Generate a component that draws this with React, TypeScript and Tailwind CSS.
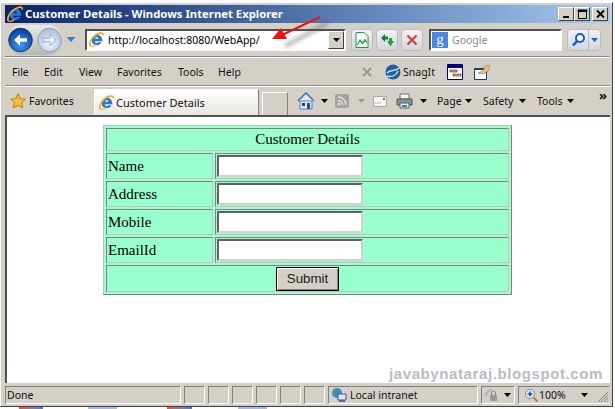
const ui = "font-['Noto_Sans','Liberation_Sans',sans-serif]";

function Caret({ className = "" }: { className?: string }) {
  return (
    <svg width="7" height="4" viewBox="0 0 7 4" className={className}>
      <path d="M0 0h7L3.5 4z" fill="currentColor" />
    </svg>
  );
}

function IeLogo({ size = 16 }: { size?: number }) {
  return (
    <svg width={size} height={size} viewBox="0 0 16 16" className="shrink-0">
      <path
        d="M8.500 2.800c-3.300 0-5.700 2.500-5.700 5.700s2.400 5.500 5.400 5.500c2.500 0 4.300-1.100 5.200-3.200H10c-.4.700-1 1-1.800 1-1 0-1.900-.8-2-2h8c.3-4-2.200-7-5.700-7zM6.300 7.300c.2-1 1-1.700 2-1.700s1.800.7 1.900 1.700z"
        fill="#2378d8"
        fillRule="evenodd"
      />
      <path d="M1.200 15C-.5 10 5 3 12 1.200c2.200-.5 3.600.3 3 2.200" fill="none" stroke="#f2a818" strokeWidth="1.700" />
      <path d="M1.200 15c2 .9 4.500-.2 6.500-1.800" fill="none" stroke="#f2a818" strokeWidth="1.200" />
    </svg>
  );
}

function NavCircle({ active }: { active: boolean }) {
  return (
    <svg width="25" height="26" viewBox="0 0 25 26">
      <defs>
        <radialGradient id="navBack" cx="50%" cy="70%" r="65%">
          <stop offset="0%" stopColor="#3f9cf0" />
          <stop offset="100%" stopColor="#0a3f9c" />
        </radialGradient>
        <radialGradient id="navFwd" cx="50%" cy="65%" r="65%">
          <stop offset="0%" stopColor="#f2f5fa" />
          <stop offset="100%" stopColor="#a9bbd6" />
        </radialGradient>
      </defs>
      <circle cx="12.500" cy="13" r="11.800" fill={active ? "url(#navBack)" : "url(#navFwd)"} stroke={active ? "#123a7c" : "#8ea2bf"} />
      {active ? (
        <path d="M19 11.200h-7V7.500L6 13l6 5.500v-3.700h7z" fill="#fff" />
      ) : (
        <path d="M6 11.200h7V7.500l6 5.500-6 5.500v-3.700H6z" fill="#eef2f8" stroke="#8b9db8" strokeWidth=".8" />
      )}
    </svg>
  );
}

function WinButton({ kind }: { kind: "min" | "max" | "close" }) {
  return (
    <div className="flex h-[14px] w-[16px] items-center justify-center border border-t-white border-l-white border-r-[#404040] border-b-[#404040] bg-[#d4d0c8]">
      <svg width="11" height="10" viewBox="0 0 11 10">
        {kind === "min" && <path d="M2 7h6v2H2z" fill="#000" />}
        {kind === "max" && <path d="M1.500 1.500h8v8h-8zM1 1h9v1.500H1z" fill="none" stroke="#000" />}
        {kind === "close" && <path d="M2 1.500l7 7M9 1.500l-7 7" stroke="#000" strokeWidth="1.800" />}
      </svg>
    </div>
  );
}

function ToolButton({ children }: { children: React.ReactNode }) {
  return (
    <div className="flex h-[22px] w-[22px] items-center justify-center rounded-[4px] border border-[#b8bcc4] bg-gradient-to-b from-[#f0f2f6] to-[#d2d6de]">
      {children}
    </div>
  );
}

function Separator() {
  return <div className="h-[2px] shrink-0 border-t border-b border-t-[#8a8a8a] border-b-white" />;
}

function Toolbar() {
  return (
    <div className="flex h-[33px] shrink-0 items-center pl-[2px]">
      <div className="flex h-[30px] items-center gap-[4px] rounded-full bg-gradient-to-b from-[#eceae6] to-[#b8b6b0] pl-[1px] pr-[1px]">
        <NavCircle active />
        <NavCircle active={false} />
      </div>
      <Caret className="ml-[3px] h-[5px] w-[10px] text-[#2f7fd0]" />
      <div className="ml-[9px] flex h-[22px] w-[261px] items-center border-2 border-t-[#505050] border-l-[#505050] border-r-white border-b-white bg-white">
        <div className="ml-[2px]">
          <IeLogo size={15} />
        </div>
        <span className="ml-[4px] pt-[2px] text-[10.500px] leading-none text-black">http://localhost:8080/WebApp/</span>
        <div className="ml-auto flex h-[18px] w-[16px] items-center justify-center border border-t-white border-l-white border-r-[#404040] border-b-[#404040] bg-[#d4d0c8]">
          <Caret className="text-black" />
        </div>
      </div>
      <div className="ml-[5px] flex items-center gap-[3px]">
        <ToolButton>
          <svg width="14" height="16" viewBox="0 0 14 16">
            <path d="M1 .5h8l4 4v11H1z" fill="#fff" stroke="#1e9a3c" />
            <path d="M2 12l3-5 2.500 3L10 6.500l2 3v2l-2-2-2.500 3L5 9.500 2 14z" fill="#2aa84a" />
          </svg>
        </ToolButton>
        <ToolButton>
          <svg width="15" height="14" viewBox="0 0 15 14">
            <path d="M1 5l4-4v2.500h3v3H5V9z" fill="#1e7a30" />
            <path d="M14 8l-3.500 5.500L7 8h2V5h3v3z" fill="#2fa040" />
          </svg>
        </ToolButton>
        <ToolButton>
          <svg width="12" height="12" viewBox="0 0 12 12">
            <path d="M1.500 1.500l9 9M10.500 1.500l-9 9" stroke="#c8484a" strokeWidth="2.400" />
          </svg>
        </ToolButton>
      </div>
      <div className="ml-[6px] flex h-[22px] w-[133px] items-center border-2 border-t-[#505050] border-l-[#505050] border-r-white border-b-white bg-white">
        <div className="ml-[1px] flex h-[16px] w-[16px] items-center justify-center bg-[#4a86e8] font-['Liberation_Serif',serif] text-[15px] leading-none text-white">
          g
        </div>
        <span className="ml-[4px] pt-[2px] text-[10.500px] leading-none text-[#8a8a8a]">Google</span>
      </div>
      <div className="ml-[5px] flex h-[22px] w-[34px] rounded-[4px] border border-[#b8bcc4] bg-gradient-to-b from-[#f0f2f6] to-[#d2d6de]">
        <div className="flex w-[21px] items-center justify-center border-r border-[#b8bcc4]">
          <svg width="15" height="15" viewBox="0 0 15 15">
            <circle cx="9" cy="6" r="4" fill="#fff" stroke="#1258d0" strokeWidth="2" />
            <path d="M6 9l-4 4.500" stroke="#1258d0" strokeWidth="2.600" />
          </svg>
        </div>
        <div className="flex flex-1 items-center justify-center">
          <Caret className="text-[#1a5fd0]" />
        </div>
      </div>
    </div>
  );
}

function MenuBar() {
  return (
    <div className="flex h-[27px] shrink-0 items-center pt-[1px] text-[10.500px] leading-none text-[#111]">
      <span className="ml-[7px] w-[16px]">File</span>
      <span className="ml-[16px] w-[18px]">Edit</span>
      <span className="ml-[17px] w-[21px]">View</span>
      <span className="ml-[17px] w-[44px]">Favorites</span>
      <span className="ml-[17px] w-[24px]">Tools</span>
      <span className="ml-[16px] w-[21px]">Help</span>
      <svg width="10" height="10" viewBox="0 0 10 10" className="ml-[123px]">
        <path d="M1 1l8 8M9 1L1 9" stroke="#9a9a9a" strokeWidth="2.200" />
      </svg>
      <svg width="16" height="16" viewBox="0 0 16 16" className="ml-[13px]">
        <circle cx="8" cy="8" r="7.500" fill="#1f5f9f" />
        <path d="M2 9c3-4 8-1 12-5M2 12c4 1 9 0 11-5" fill="none" stroke="#bfe2f5" strokeWidth="1.600" />
      </svg>
      <span className="ml-[2px] w-[32px]">SnagIt</span>
      <svg width="16" height="16" viewBox="0 0 16 16" className="ml-[12px]">
        <path d="M.5.500h15v15H.5z" fill="#fff" stroke="#000080" />
        <path d="M1 1h14v3H1z" fill="#000080" />
        <path d="M3 6h7v2H3zM6 10h8v2H6z" fill="#f0b020" stroke="#000080" strokeWidth=".5" />
      </svg>
      <svg width="16" height="16" viewBox="0 0 16 16" className="ml-[11px]">
        <path d="M.5 4.500h12v11H.5z" fill="#fff" stroke="#1a3a7a" />
        <path d="M1 4h11v2H1z" fill="#1a3a7a" />
        <path d="M4 9l5-2 2-5 5-1-2 6-5 3z" fill="#e8c078" stroke="#8a6a30" strokeWidth=".5" />
      </svg>
    </div>
  );
}

function TabBar() {
  return (
    <div className="flex h-[28px] shrink-0 items-center text-[10.500px] leading-none text-[#111]">
      <svg width="16" height="16" viewBox="0 0 16 16" className="ml-[5px]">
        <path d="M8 .8l2.200 4.800 5.200.6-3.900 3.500 1.100 5.200L8 12.300 3.400 14.900l1.100-5.200L.6 6.200l5.200-.6z" fill="#f8c030" stroke="#c07a10" />
      </svg>
      <span className="ml-[3px] w-[45px]">Favorites</span>
      <div className="ml-[20px] flex h-[26px] w-[165px] items-center self-end border-t border-l border-r border-t-white border-l-white border-r-[#808080] bg-gradient-to-b from-white to-[#e8e6e0] pl-[4px] text-[11px]">
        <IeLogo size={15} />
        <span className="ml-[2px]">Customer Details</span>
      </div>
      <div className="ml-[3px] h-[23px] w-[26px] self-end border-t border-l border-r border-t-white border-l-white border-r-[#808080]" />
      <svg width="18" height="18" viewBox="0 0 18 18" className="ml-[9px]">
        <path d="M1 9l8-8 8 8" fill="#dbe8f6" stroke="#3f6fb0" strokeWidth="1.500" />
        <path d="M3 9h12v8H3z" fill="#dce6f2" stroke="#5a7fb0" />
        <path d="M5 11h3v3H5z" fill="#1f3f80" />
        <path d="M10 11h3v6h-3z" fill="#1f4fa0" />
      </svg>
      <Caret className="ml-[6px] text-black" />
      <div className="ml-[7px] flex h-[14px] w-[14px] items-center justify-center rounded-[2px] bg-[#a4a4a0]">
        <svg width="10" height="10" viewBox="0 0 10 10">
          <circle cx="2" cy="8" r="1.300" fill="#e4e4e0" />
          <path d="M1 4.500A4.500 4.500 0 0 1 5.500 9M1 1a8 8 0 0 1 8 8" fill="none" stroke="#e4e4e0" strokeWidth="1.400" />
        </svg>
      </div>
      <Caret className="ml-[9px] text-[#9a9a9a]" />
      <svg width="14" height="11" viewBox="0 0 14 11" className="ml-[8px]">
        <path d="M.5.500h13v10H.5z" fill="#f4f4f0" stroke="#a8a8a4" />
        <path d="M10 2h2v2h-2z" fill="#d84040" />
        <path d="M2 7h6" stroke="#c0c0bc" />
      </svg>
      <svg width="17" height="16" viewBox="0 0 17 16" className="ml-[9px]">
        <path d="M4 1h9v5H4z" fill="#f4f4f4" stroke="#707070" />
        <path d="M1 6h15v6H1z" fill="#8c8f94" stroke="#505458" />
        <path d="M4 10h9v5H4z" fill="#e8f0f0" stroke="#506060" />
        <path d="M6 12h5v2H6z" fill="#2a8a9a" />
      </svg>
      <Caret className="ml-[7px] text-black" />
      <span className="ml-[10px] w-[23px]">Page</span>
      <Caret className="ml-[5px] text-black" />
      <span className="ml-[11px] w-[31px]">Safety</span>
      <Caret className="ml-[5px] text-black" />
      <span className="ml-[11px] w-[25px]">Tools</span>
      <Caret className="ml-[5px] text-black" />
      <span className="ml-[25px] self-start pt-[2px] text-[13px] font-bold">»</span>
    </div>
  );
}

function Page() {
  const rows = ["Name", "Address", "Mobile", "EmailId"];
  const cell = "border border-t-[#808080] border-l-[#808080] border-r-[#c0c0c0] border-b-[#c0c0c0]";
  return (
    <div className="flex min-h-0 flex-1 flex-col border-t-2 border-l-2 border-t-[#505050] border-l-[#505050] bg-white">
      <table className="mt-[8px] ml-[96px] w-[409px] table-fixed border-separate border border-t-[#c0c0c0] border-l-[#c0c0c0] border-r-[#808080] border-b-[#808080] bg-[#99ffcc] font-['Liberation_Serif',serif] text-[15px] leading-none text-black [border-spacing:2px]">
        <colgroup>
          <col className="w-[107px]" />
          <col />
        </colgroup>
        <tbody>
          <tr className="h-[23px]">
            <td colSpan={2} className={`${cell} text-center`}>
              Customer Details
            </td>
          </tr>
          {rows.map((label) => (
            <tr key={label} className="h-[26px]">
              <td className={`${cell} pl-[1px]`}>{label}</td>
              <td className={`${cell} pl-[1px]`}>
                <input
                  type="text"
                  className="block h-[22px] w-[146px] border-2 border-t-[#606060] border-l-[#606060] border-r-[#d4d0c8] border-b-[#d4d0c8] bg-white"
                />
              </td>
            </tr>
          ))}
          <tr className="h-[27px]">
            <td colSpan={2} className={`${cell} text-center`}>
              <button className="mx-auto block h-[24px] w-[63px] border border-black bg-[#d4d0c8] font-['Liberation_Sans',sans-serif] text-[13.330px] leading-none text-[#222] shadow-[inset_1px_1px_0_#fff,inset_-1px_-1px_0_#808080]">
                Submit
              </button>
            </td>
          </tr>
        </tbody>
      </table>
      <span className="mt-auto mr-[7px] self-end font-['Liberation_Sans',sans-serif] text-[15px] font-bold leading-[18px] tracking-[0.6px] text-[#b9bcc6]">
        javabynataraj.blogspot.com
      </span>
    </div>
  );
}

function StatusBar() {
  const sunken = "flex h-[18px] items-center border border-t-[#808080] border-l-[#808080] border-r-white border-b-white";
  return (
    <div className="mt-[3px] flex h-[19px] shrink-0 gap-[3px] text-[10.500px] leading-none text-[#111]">
      <div className={`${sunken} w-[176px] pl-[1px]`}>Done</div>
      {[0, 1, 2, 3, 4, 5].map((i) => (
        <div key={i} className={`${sunken} w-[21px]`} />
      ))}
      <div className={`${sunken} w-[150px] pl-[2px]`}>
        <svg width="16" height="16" viewBox="0 0 16 16">
          <circle cx="6" cy="6" r="5" fill="#3a90d8" />
          <path d="M3 3c2-1 4 0 4 2S4 8 3 6z" fill="#40a040" />
          <path d="M7 7h8v6H7z" fill="#dfe6f0" stroke="#3a5a90" />
          <path d="M8 14h6" stroke="#3a5a90" strokeWidth="1.500" />
        </svg>
        <span className="ml-[3px]">Local intranet</span>
      </div>
      <div className={`${sunken} w-[34px] pl-[3px]`}>
        <svg width="15" height="15" viewBox="0 0 15 15">
          <path d="M1 8c0-4 3-6 6-6" fill="none" stroke="#b0b0b0" strokeWidth="2" />
          <path d="M5 7h7v6H5z" fill="#9a9a9a" />
          <path d="M6.500 7V5a2 2 0 0 1 4 0v2" fill="none" stroke="#8a8a8a" />
        </svg>
        <Caret className="ml-[4px] text-black" />
      </div>
      <div className="relative flex h-[18px] w-[92px] items-center border border-t-[#808080] border-l-[#808080] border-r-transparent border-b-white pl-[5px]">
        <svg width="14" height="14" viewBox="0 0 14 14">
          <circle cx="6" cy="6" r="4.500" fill="#e8f0fa" stroke="#7a8aa0" />
          <path d="M3.500 6h5M6 3.500v5" stroke="#1a50c0" strokeWidth="1.600" />
          <path d="M9.500 9.500l4 4" stroke="#b08040" strokeWidth="2" />
        </svg>
        <span className="ml-[1px]">100%</span>
        <Caret className="ml-[15px] text-black" />
        <svg width="12" height="12" viewBox="0 0 12 12" className="absolute right-0 bottom-0">
          <path d="M11 1L1 11M11 4l-7 7M11 7l-4 4M11 10l-1 1" stroke="#808080" />
        </svg>
      </div>
    </div>
  );
}

export default function App() {
  return (
    <div className={`relative h-[409px] w-[615px] overflow-hidden bg-white ${ui}`}>
      <div className="mt-[2px] flex h-[405px] w-[613px] flex-col border border-t-white border-l-white border-r-[#404040] border-b-[#404040] bg-[#d4d0c8] pt-[2px] pr-[2px] pb-[1px] pl-[4px]">
        <div className="flex h-[18px] shrink-0 items-center bg-gradient-to-r from-[#0a246a] to-[#a6caf0] pl-[2px] pr-[2px]">
          <IeLogo size={16} />
          <span className="ml-[2px] text-[11.300px] font-bold leading-none text-white">
            Customer Details - Windows Internet Explorer
          </span>
          <div className="ml-auto flex items-center">
            <WinButton kind="min" />
            <WinButton kind="max" />
            <div className="ml-[2px]">
              <WinButton kind="close" />
            </div>
          </div>
        </div>
        <Toolbar />
        <Separator />
        <MenuBar />
        <Separator />
        <TabBar />
        <Page />
        <StatusBar />
      </div>
      <div className="flex h-[2px] pl-[19px]">
        <div className="h-full w-[24px] bg-gradient-to-r from-[#e05020] to-[#2080e0]" />
        <div className="ml-[45px] h-full w-[29px] bg-[#a8b8e0]" />
        <div className="ml-[50px] h-full w-[25px] bg-gradient-to-r from-[#e05020] to-[#2080e0]" />
        <div className="ml-[46px] h-full w-[29px] bg-[#a8b8e0]" />
      </div>
      <svg width="64" height="40" viewBox="0 0 64 40" className="absolute top-[14px] left-[268px]">
        <path d="M55 4L12 27" stroke="#555" strokeWidth="4" opacity=".45" transform="translate(5 5)" className="blur-[2px]" />
        <path d="M52 3L14 21" stroke="#f01010" strokeWidth="2" />
        <path d="M4 25l9-11 6 11z" fill="#f01010" />
      </svg>
    </div>
  );
}
